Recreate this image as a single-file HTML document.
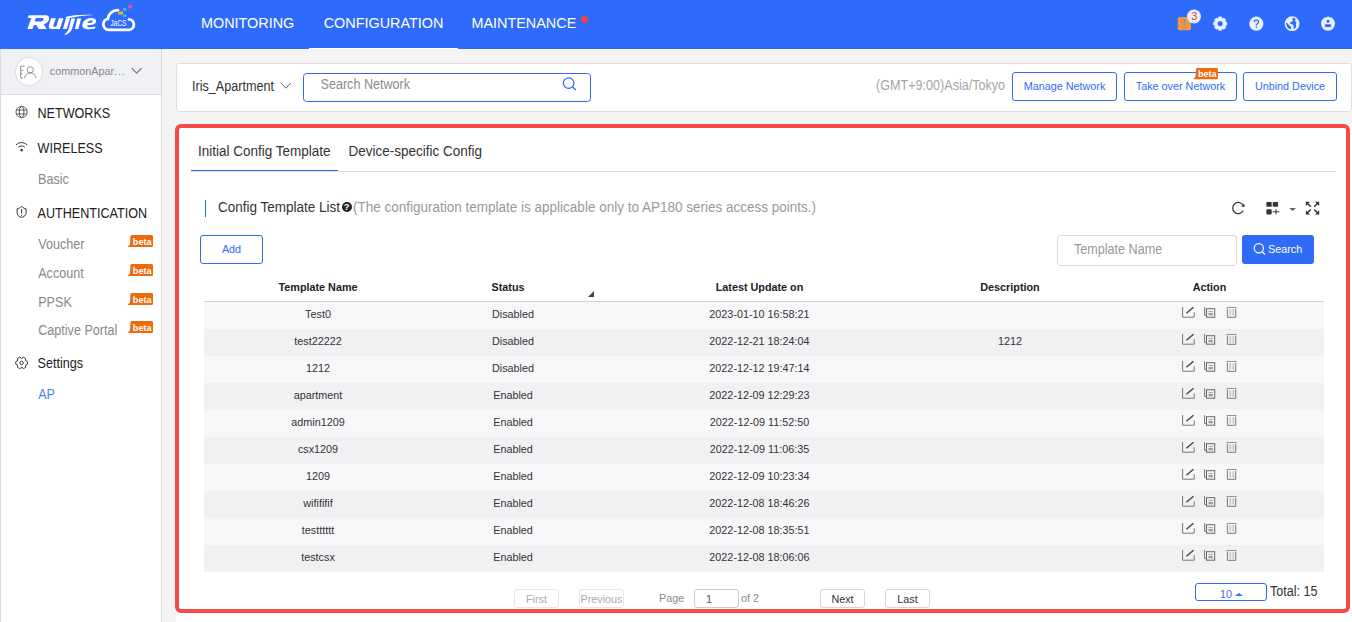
<!DOCTYPE html>
<html><head><meta charset="utf-8">
<style>
*{box-sizing:border-box;margin:0;padding:0}
html,body{width:1352px;height:622px;overflow:hidden;background:#f4f4f4;font-family:"Liberation Sans",sans-serif;color:#333}
.a{position:absolute;white-space:nowrap;line-height:1}
#hdr{position:absolute;left:0;top:0;width:1352px;height:49px;background:#2e6bfa}
.nav{color:#fff;font-size:14.4px}
#side{position:absolute;left:0;top:49px;width:162px;height:573px;background:#fff;border-left:1px solid #dcdcdc;border-right:1px solid #dcdcdc}
#usr{position:absolute;left:0;top:0;width:160px;height:46px;background:#f0f1f4;border-bottom:1px solid #dcdcdc}
.mi{font-size:12.6px;color:#222;transform:scaleY(1.1);transform-origin:0 85%}
.si{font-size:12.6px;color:#888;transform:scaleY(1.1);transform-origin:0 85%}
.beta{position:absolute;width:26px;height:12px}
#netbar{position:absolute;left:176px;top:63px;width:1176px;height:49px;background:#fff;border:1px solid #dedede;border-radius:3px}
.btn{position:absolute;border:1px solid #2f6bf5;border-radius:3px;color:#2f6bf5;font-size:10.8px;text-align:center;background:#fff}
#card{position:absolute;left:176px;top:124px;width:1176px;height:498px;background:#fff}
#red{position:absolute;left:175px;top:124px;width:1175px;height:489px;border:4px solid #f44a48;border-radius:6px}
.th{font-size:10.8px;font-weight:bold;color:#222}
.td{font-size:10.8px;color:#333}

#tbl{position:absolute;left:204px;top:275px;width:1120px;border-collapse:separate;border-spacing:0;table-layout:fixed}
#tbl th{height:27px;font-size:10.8px;font-weight:bold;color:#222;text-align:center;border-bottom:1px solid #d0d0d0;padding:0 0 2px 0;vertical-align:middle}
#tbl td{height:27px;font-size:10.8px;color:#333;text-align:center;padding:0 0 4px 0;vertical-align:middle}
.pbtn{position:absolute;height:19px;border:1px solid #d6d6d6;border-radius:3px;background:#fff;font-size:10.8px;color:#333;text-align:center;line-height:18.5px}
.pbtn.dis{color:#aaa;border-color:#e6e6e6}

.t{transform:scaleY(1.1);transform-origin:0 85%}
</style></head><body>
<div id="hdr">
  <svg class="a" style="left:0;top:0" width="1352" height="49" viewBox="0 0 1352 49">
    <!-- logo -->
    <g fill="#fff">
      <path fill-rule="evenodd" d="M28.8,15.3 L45.5,15.3 C48.8,15.3 49.6,17.5 48.9,19.8 C48.3,22 46.6,23.6 43.8,24.3 L46.6,29.1 L38.6,29.1 L36.2,25 L34.1,25 L32.4,29.1 L27.4,29.1 L31.3,18.1 L27.8,18.1 Z M35.8,18.1 L42.2,18.1 C43.4,18.1 43.7,18.9 43.4,19.8 C43.1,20.9 42.2,21.5 40.8,21.5 L34.6,21.5 Z"/>
      <path d="M51,18.3 L55.8,18.3 L53.4,25.3 C53,26.4 53.5,26.8 54.6,26.8 L56.2,26.8 L58.9,18.3 L63.5,18.3 L59.9,29.1 L51.8,29.1 C49.3,29.1 48.2,27.8 48.9,25.8 Z"/>
      <path d="M65.9,18.4 L69.9,18.4 L66.8,28.9 L62.9,28.9 Z"/>
      <path d="M71.3,18.4 L75.1,18.4 L72.6,27 C71.6,31.2 69.3,33.8 65.2,35 L64.6,33.9 C67.2,32.5 68.3,30.5 69.1,27.5 Z"/>
      <path d="M77.3,18.4 L81.2,18.4 L78.4,28.9 L74.9,28.9 Z"/>
      <path fill-rule="evenodd" d="M82.3,25 C82.8,21 86.5,18.1 91,18.1 C94.6,18.1 96.4,19.6 96.1,21.6 C95.7,24.2 92.5,25.4 86.9,25.4 C87,26.8 88.3,27.2 90.5,27.2 C92.5,27.2 94.2,26.9 95.6,26.4 L94.9,28.6 C93,29 91.5,29.2 89.3,29.2 C84.6,29.2 82,27.8 82.3,25 Z M87.3,23.1 C87.9,21.2 89.3,20.4 90.9,20.4 C92.1,20.4 92.7,20.9 92.5,21.7 C92.2,22.8 90.6,23.1 87.3,23.1 Z"/>
      <path d="M65.8,16.9 C73,15.1 82,14.2 93.8,15 C84,15.4 74,16.8 66.3,18.9 Z"/>
    </g>
    <!-- cloud -->
    <path d="M129,19.3 A5.3 5.3 0 0 1 129.5,29.8 L108.5,29.8 A5.5 5.5 0 0 1 107.8,18.9 A10 10 0 0 1 118,10.1" fill="none" stroke="#fff" stroke-width="2.8" stroke-linecap="round"/>
    <text x="110.2" y="25.6" font-family="Liberation Sans" font-size="8.6" fill="#fff" textLength="16.4" lengthAdjust="spacingAndGlyphs">JaCS</text>
    <rect x="128.4" y="5.2" width="3.6" height="3.2" fill="#f0508a"/>
    <rect x="123.2" y="8.1" width="3" height="2.6" fill="#39c6f4"/>
    <rect x="118.3" y="11.5" width="4.7" height="3.1" fill="#f5b324"/>
    <rect x="123.2" y="14.6" width="3" height="2.3" fill="#39c6f4"/>
    <!-- alert -->
    <rect x="1177.8" y="17" width="13.2" height="13.2" rx="1.6" fill="#f0973a"/>
    <rect x="1183.6" y="19" width="1.5" height="6.5" fill="#7a95d8"/>
    <rect x="1183.6" y="27" width="1.5" height="1.5" fill="#7a95d8"/>
    <circle cx="1194" cy="16.5" r="7" fill="#e9effd"/>
    <text x="1194.2" y="20.1" font-family="Liberation Sans" font-size="11" fill="#d8434a" text-anchor="middle">3</text>
    <!-- gear -->
    <g transform="translate(1220.2 23.7)">
      <path d="M-1.94 -5.15 L-1.53 -6.83 L1.53 -6.83 L1.94 -5.15 L2.27 -5.01 L3.75 -5.91 L5.91 -3.75 L5.01 -2.27 L5.15 -1.94 L6.83 -1.53 L6.83 1.53 L5.15 1.94 L5.01 2.27 L5.91 3.75 L3.75 5.91 L2.27 5.01 L1.94 5.15 L1.53 6.83 L-1.53 6.83 L-1.94 5.15 L-2.27 5.01 L-3.75 5.91 L-5.91 3.75 L-5.01 2.27 L-5.15 1.94 L-6.83 1.53 L-6.83 -1.53 L-5.15 -1.94 L-5.01 -2.27 L-5.91 -3.75 L-3.75 -5.91 L-2.27 -5.01 Z M0 -2.75 A2.75 2.75 0 1 0 0.01 -2.75 Z" fill="#e9effd" fill-rule="evenodd" stroke="#e9effd" stroke-width="0.3" stroke-linejoin="round"/>
    </g>
    <!-- help -->
    <circle cx="1256.3" cy="23.7" r="7.1" fill="#e9effd"/>
    <path d="M1254.2 22 C1254.2 19.6 1258.5 19.6 1258.5 22 C1258.5 23.5 1256.4 23.6 1256.4 25.5" fill="none" stroke="#2e6bfa" stroke-width="1.2"/>
    <rect x="1255.7" y="26.6" width="1.4" height="1.3" fill="#2e6bfa"/>
    <!-- globe -->
    <clipPath id="gclip"><circle cx="1292.1" cy="23.7" r="6.1"/></clipPath>
    <circle cx="1292.1" cy="23.7" r="7.4" fill="#e9effd"/>
    <g clip-path="url(#gclip)" fill="#2e6bfa">
      <path d="M1292.3,17.6 L1294.9,17.4 L1295.7,19.5 L1294.7,21 L1296.5,22.2 L1295.9,24.5 L1296.3,26.5 L1294.9,28.7 L1293.2,28.3 L1293.8,26 L1292.4,24.3 L1290.2,23.9 L1290.3,22.2 L1292.6,21.3 L1292.8,19.8 Z"/>
      <path d="M1285.8,23 L1287.6,23.3 L1289.1,25.6 L1290.9,26.6 L1291.1,29.2 L1289.4,29.3 L1287.1,27.2 Z"/>
    </g>
    <!-- user -->
    <circle cx="1328" cy="23.7" r="7" fill="#e9effd"/>
    <circle cx="1328" cy="21.2" r="1.5" fill="#2e6bfa"/>
    <rect x="1324.8" y="24.3" width="6.4" height="2.7" rx="1.2" fill="#2e6bfa"/>
  </svg>

  <div class="a nav" style="left:201px;top:15.8px">MONITORING</div>
  <div class="a nav" style="left:323.7px;top:15.8px">CONFIGURATION</div>
  <div class="a nav" style="left:471.5px;top:15.8px">MAINTENANCE</div>
  <div class="a" style="left:581px;top:16px;width:7px;height:7px;border-radius:50%;background:#f0453a"></div>
  <div class="a" style="left:309px;top:47.6px;width:148.5px;height:1.4px;background:#fff"></div>
</div>

<div id="side">
  
  <svg class="a" style="left:-1px;top:-49px;z-index:3" width="162" height="622" viewBox="0 0 162 622">
    <!-- avatar -->
    <g fill="none" stroke="#888" stroke-width="0.9">
      <path d="M24.5 66.2 L20.6 66.2 L20.6 78 L23 78 M20.6 70.3 L23.2 70.3 M20.6 73.8 L22.6 73.8"/>
      <circle cx="30.3" cy="69.8" r="3.1"/>
      <path d="M24.6 78.2 C25 74.5 27.5 73.2 30.3 73.2 C33 73.2 35.6 74.5 36 78.2"/>
    </g>
    <path d="M131.7 68.1 L136.6 73.1 L141.6 68.1" fill="none" stroke="#777" stroke-width="1.2"/>
    <!-- globe -->
    <g fill="none" stroke="#444" stroke-width="0.85">
      <circle cx="21.6" cy="112" r="5.6"/>
      <ellipse cx="21.6" cy="112" rx="2.3" ry="5.6"/>
      <path d="M16.3 110 H26.9 M16.3 114 H26.9"/>
    </g>
    <!-- wifi -->
    <g fill="none" stroke="#333" stroke-width="1">
      <path d="M16 145 C19 141.8 24.2 141.8 27.2 145"/>
      <path d="M18.3 147.3 C20 145.5 23.2 145.5 24.9 147.3"/>
    </g>
    <circle cx="21.6" cy="150.1" r="1.3" fill="#333"/>
    <!-- shield -->
    <g fill="none" stroke="#333" stroke-width="1">
      <path d="M21.6 206.5 C20 207.8 18.6 208.6 17.1 208.9 V212.5 C17.1 215.3 19 217 21.6 217.3 C24.2 217 26.1 215.3 26.1 212.5 V208.9 C24.6 208.6 23.2 207.8 21.6 206.5 Z"/>
      <path d="M21.6 209 V213.6"/>
    </g>
    <circle cx="21.6" cy="215.3" r="0.6" fill="#333"/>
    <!-- gear -->
    <g transform="translate(21.6 362.9)" fill="none" stroke="#333" stroke-width="0.95" stroke-linejoin="round">
      <path d="M4.12 -2.25 L5.88 -1.19 L5.88 1.19 L4.12 2.25 Q3.38 1.95 4.01 2.45 L3.97 4.50 L1.91 5.69 L0.11 4.70 Q0.00 3.90 -0.11 4.70 L-1.91 5.69 L-3.97 4.50 L-4.01 2.45 Q-3.38 1.95 -4.12 2.25 L-5.88 1.19 L-5.88 -1.19 L-4.12 -2.25 Q-3.38 -1.95 -4.01 -2.45 L-3.97 -4.50 L-1.91 -5.69 L-0.11 -4.70 Q-0.00 -3.90 0.11 -4.70 L1.91 -5.69 L3.97 -4.50 L4.01 -2.45 Q3.38 -1.95 4.12 -2.25 Z"/>
      <circle cx="0" cy="0" r="1.7"/>
    </g>
  </svg>
<div id="usr">
    <div class="a" style="left:13.8px;top:7.6px;width:28px;height:29px;border-radius:50%;background:#fff;border:1px solid #ddd"></div>
    <div class="a" style="left:48.8px;top:12px;font-size:10.8px;color:#888;line-height:20px;letter-spacing:0">commonApar<span style="letter-spacing:0.9px">...</span></div>
  </div>
  <div class="a mi" style="left:36.5px;top:59.0px">NETWORKS</div>
  <div class="a mi" style="left:36.5px;top:93.5px">WIRELESS</div>
  <div class="a si" style="left:37px;top:125.2px">Basic</div>
  <div class="a mi" style="left:36.5px;top:159.0px">AUTHENTICATION</div>
  <div class="a si" style="left:37.2px;top:189.6px">Voucher</div>
  <div class="a si" style="left:37.2px;top:218.8px">Account</div>
  <div class="a si" style="left:37.2px;top:247.6px">PPSK</div>
  <div class="a si" style="left:37.2px;top:275.8px">Captive Portal</div>
  <div class="a mi" style="left:36.5px;top:309.4px">Settings</div>
  <div class="a si" style="left:37.2px;top:340.4px;color:#4a84f2">AP</div>
<svg class="a" style="left:126.3px;top:186px" width="27" height="13" viewBox="0 0 27 13"><path d="M3.4 1.5 Q3.4 0 4.9 0 H24.5 Q26 0 26 1.5 V10.4 Q26 11.9 24.5 11.9 H0.7 L3 9.3 Z" fill="#f06a0a"/><text x="15.2" y="10" font-family="Liberation Sans" font-weight="bold" font-size="9.1" fill="#fff" text-anchor="middle">beta</text></svg><svg class="a" style="left:126.3px;top:215px" width="27" height="13" viewBox="0 0 27 13"><path d="M3.4 1.5 Q3.4 0 4.9 0 H24.5 Q26 0 26 1.5 V10.4 Q26 11.9 24.5 11.9 H0.7 L3 9.3 Z" fill="#f06a0a"/><text x="15.2" y="10" font-family="Liberation Sans" font-weight="bold" font-size="9.1" fill="#fff" text-anchor="middle">beta</text></svg><svg class="a" style="left:126.3px;top:244px" width="27" height="13" viewBox="0 0 27 13"><path d="M3.4 1.5 Q3.4 0 4.9 0 H24.5 Q26 0 26 1.5 V10.4 Q26 11.9 24.5 11.9 H0.7 L3 9.3 Z" fill="#f06a0a"/><text x="15.2" y="10" font-family="Liberation Sans" font-weight="bold" font-size="9.1" fill="#fff" text-anchor="middle">beta</text></svg><svg class="a" style="left:126.3px;top:272px" width="27" height="13" viewBox="0 0 27 13"><path d="M3.4 1.5 Q3.4 0 4.9 0 H24.5 Q26 0 26 1.5 V10.4 Q26 11.9 24.5 11.9 H0.7 L3 9.3 Z" fill="#f06a0a"/><text x="15.2" y="10" font-family="Liberation Sans" font-weight="bold" font-size="9.1" fill="#fff" text-anchor="middle">beta</text></svg>
</div>

<div id="netbar">
  
<div class="a t" style="left:15px;top:16.8px;font-size:12.6px;color:#333">Iris_Apartment</div>
  <svg class="a" style="left:-1px;top:-1px" width="1176" height="49" viewBox="176 63 1176 49">
    <path d="M281.2 83.2 L285.9 88.2 L290.6 83.2" fill="none" stroke="#666" stroke-width="1"/>
    <circle cx="568.6" cy="83.1" r="5.3" fill="none" stroke="#2f6bf5" stroke-width="1.2"/>
    <path d="M572.6 86.9 L575.8 90.1" stroke="#2f6bf5" stroke-width="1.4"/>
  </svg>
  <div class="a" style="left:126px;top:9px;width:288px;height:29px;border:1.3px solid #2f6bf5;border-radius:3.5px"></div>
  <div class="a t" style="left:143.5px;top:15.2px;font-size:12.6px;color:#8c8c8c">Search Network</div>
  <div class="a t" style="left:699px;top:15.8px;font-size:12.6px;color:#a6a6a6">(GMT+9:00)Asia/Tokyo</div>
  <div class="btn" style="left:835px;top:8px;width:105px;height:29px;line-height:27px">Manage Network</div>
  <div class="btn" style="left:947px;top:8px;width:113px;height:29px;line-height:27px">Take over Network</div>
  <div class="btn" style="left:1066px;top:8px;width:94px;height:29px;line-height:27px">Unbind Device</div>
  <svg class="a" style="left:1016px;top:4px" width="26" height="12" viewBox="0 0 26 12">
    <path d="M3 1.5 Q3 0 4.5 0 H23.5 Q25 0 25 1.5 V9.7 Q25 11.2 23.5 11.2 H0.3 L2.6 8.6 Z" fill="#f06a0a"/>
    <text x="14.2" y="8.9" font-family="Liberation Sans" font-weight="bold" font-size="9" fill="#fff" text-anchor="middle">beta</text>
  </svg>

</div>


<div id="card"></div>
<div class="a t" style="left:198px;top:144.6px;font-size:13.5px;color:#333">Initial Config Template</div>
<div class="a t" style="left:348.5px;top:144.6px;font-size:13.5px;color:#333">Device-specific Config</div>
<div class="a" style="left:191px;top:171px;width:1145px;height:1px;background:#dcdcdc"></div>
<div class="a" style="left:191px;top:169.7px;width:147px;height:1.4px;background:#2f6bf5"></div>

<div class="a" style="left:205px;top:200px;width:1px;height:17px;background:#2f6bf5"></div>
<div class="a t" style="left:218px;top:200.9px;font-size:13.5px;color:#333">Config Template List</div>
<div class="a" style="left:341.6px;top:201.8px;width:10px;height:10px;border-radius:50%;background:#222;color:#fff;font-size:9.5px;font-weight:bold;text-align:center;line-height:10.6px">?</div>
<div class="a t" style="left:353px;top:200.9px;font-size:13.5px;color:#999">(The configuration template is applicable only to AP180 series access points.)</div>

<div class="btn" style="left:200px;top:235px;width:63px;height:29px;line-height:27px">Add</div>

<div class="a" style="left:1057px;top:235px;width:180px;height:31px;border:1px solid #dcdcdc;border-radius:3px;background:#fff"></div>
<div class="a t" style="left:1074px;top:243.6px;font-size:12.6px;color:#999">Template Name</div>
<div class="a" style="left:1242px;top:235px;width:72px;height:29px;border-radius:3px;background:#2f6bf5"></div>
<div class="a" style="left:1268px;top:244px;font-size:10.8px;color:#fff">Search</div>

<table id="tbl">
<thead><tr><th style="width:228px">Template Name</th><th style="width:162px;padding-right:10px">Status</th><th style="width:331px">Latest Update on</th><th style="width:170px">Description</th><th>Action</th></tr></thead>
<tbody>
<tr style="background:#f7f7f9"><td>Test0</td><td class="c2">Disabled</td><td>2023-01-10 16:58:21</td><td></td><td class="act"></td></tr>
<tr style="background:#f1f1f3"><td>test22222</td><td class="c2">Disabled</td><td>2022-12-21 18:24:04</td><td>1212</td><td class="act"></td></tr>
<tr style="background:#f7f7f9"><td>1212</td><td class="c2">Disabled</td><td>2022-12-12 19:47:14</td><td></td><td class="act"></td></tr>
<tr style="background:#f1f1f3"><td>apartment</td><td class="c2">Enabled</td><td>2022-12-09 12:29:23</td><td></td><td class="act"></td></tr>
<tr style="background:#f7f7f9"><td>admin1209</td><td class="c2">Enabled</td><td>2022-12-09 11:52:50</td><td></td><td class="act"></td></tr>
<tr style="background:#f1f1f3"><td>csx1209</td><td class="c2">Enabled</td><td>2022-12-09 11:06:35</td><td></td><td class="act"></td></tr>
<tr style="background:#f7f7f9"><td>1209</td><td class="c2">Enabled</td><td>2022-12-09 10:23:34</td><td></td><td class="act"></td></tr>
<tr style="background:#f1f1f3"><td>wifififif</td><td class="c2">Enabled</td><td>2022-12-08 18:46:26</td><td></td><td class="act"></td></tr>
<tr style="background:#f7f7f9"><td>testttttt</td><td class="c2">Enabled</td><td>2022-12-08 18:35:51</td><td></td><td class="act"></td></tr>
<tr style="background:#f1f1f3"><td>testcsx</td><td class="c2">Enabled</td><td>2022-12-08 18:06:06</td><td></td><td class="act"></td></tr>
</tbody></table>
<div class="a" style="left:588px;top:291px;width:0;height:0;border-left:6px solid transparent;border-bottom:6px solid #444"></div>

<div class="pbtn dis" style="left:514px;top:589px;width:45px">First</div>
<div class="pbtn dis" style="left:579px;top:589px;width:45px">Previous</div>
<div class="a" style="left:659px;top:593px;font-size:10.8px;color:#8a8a8a">Page</div>
<div class="a" style="left:694px;top:589px;width:45px;height:19px;border:1px solid #ccc;border-radius:3px;background:#fff"></div>
<div class="a" style="left:706px;top:594px;font-size:10.8px;color:#555">1</div>
<div class="a" style="left:741px;top:593px;font-size:10.8px;color:#8a8a8a">of 2</div>
<div class="pbtn" style="left:820px;top:589px;width:45px">Next</div>
<div class="pbtn" style="left:885px;top:589px;width:45px">Last</div>

<div class="a" style="left:1195px;top:583px;width:72px;height:18px;border:1px solid #2f6bf5;border-radius:3px;background:#fff"></div>
<div class="a" style="left:1220px;top:589px;font-size:10.8px;color:#5064f2">10</div>
<div class="a" style="left:1234.5px;top:593.2px;width:0;height:0;border-left:4px solid transparent;border-right:4px solid transparent;border-bottom:3.6px solid #2f6bf5"></div>
<div class="a t" style="left:1270px;top:586px;font-size:12.6px;color:#333">Total: 15</div>


<svg class="a" style="left:0;top:0" width="1352" height="622" viewBox="0 0 1352 622">
  <!-- refresh -->
  <path d="M1243.6 206.2 A5.6 5.6 0 1 0 1243.3 210.6" fill="none" stroke="#333" stroke-width="1.2"/>
  <path d="M1241.3 206.6 L1244.6 206.9 L1244.3 203.6 Z" fill="#333"/>
  <!-- grid -->
  <rect x="1266.4" y="202" width="5.3" height="4.8" rx="0.8" fill="#333"/>
  <rect x="1272.7" y="202" width="5.4" height="4.8" rx="0.8" fill="#333"/>
  <rect x="1266.4" y="209.2" width="5.3" height="5.2" rx="0.8" fill="#333"/>
  <path d="M1272.7 211.8 H1279.4 M1276 209 V214.4" stroke="#333" stroke-width="1"/>
  <path d="M1289.3 208 H1296 L1292.65 211 Z" fill="#666"/>
  <!-- expand -->
  <g stroke="#333" stroke-width="1.5" fill="none">
    <path d="M1306.5 202.5 L1310.8 206.8 M1318.5 202.5 L1314.2 206.8 M1306.5 213.8 L1310.8 209.5 M1318.5 213.8 L1314.2 209.5"/>
  </g>
  <g fill="#333">
    <path d="M1305.8 201.8 H1310 L1305.8 206 Z"/>
    <path d="M1319.2 201.8 H1315 L1319.2 206 Z"/>
    <path d="M1305.8 214.5 H1310 L1305.8 210.3 Z"/>
    <path d="M1319.2 214.5 H1315 L1319.2 210.3 Z"/>
  </g>
  <!-- search icon in button -->
  <circle cx="1258.8" cy="248.3" r="4.6" fill="none" stroke="#fff" stroke-width="1.2"/>
  <path d="M1262.2 251.7 L1265 254.5" stroke="#fff" stroke-width="1.3"/>
</svg>

<svg class="a" style="left:0;top:0" width="1352" height="622" viewBox="0 0 1352 622">
  <defs><g id="acts">
    <path d="M1182.6 307 V317.2 H1194.2 V312.2" fill="none" stroke="#777" stroke-width="1"/>
    <path d="M1186.4 313.3 L1193.5 307.2" stroke="#444" stroke-width="1.4"/>
    <path d="M1204.6 307.2 V315.4 H1206.5" fill="none" stroke="#777" stroke-width="1"/>
    <rect x="1206.5" y="308.7" width="8.2" height="8.5" fill="none" stroke="#666" stroke-width="1"/>
    <path d="M1208.5 311.6 H1212.8" stroke="#999" stroke-width="0.9"/>
    <rect x="1208.5" y="313" width="4.3" height="2.3" fill="#999"/>
    <path d="M1226.5 307.5 H1236.5" stroke="#888" stroke-width="0.9"/>
    <path d="M1227.4 308.6 V317.3 H1235.7 V308.6" fill="none" stroke="#777" stroke-width="1"/>
    <rect x="1229.4" y="309.3" width="1.7" height="6.3" fill="#c8c8c8"/>
    <rect x="1232.4" y="309.3" width="1.7" height="6.3" fill="#c8c8c8"/>
  </g></defs>
  <use href="#acts" x="0" y="0"/><use href="#acts" x="0" y="27"/><use href="#acts" x="0" y="54"/><use href="#acts" x="0" y="81"/><use href="#acts" x="0" y="108"/><use href="#acts" x="0" y="135"/><use href="#acts" x="0" y="162"/><use href="#acts" x="0" y="189"/><use href="#acts" x="0" y="216"/><use href="#acts" x="0" y="243"/>
</svg>
<div id="red"></div>

</body></html>
